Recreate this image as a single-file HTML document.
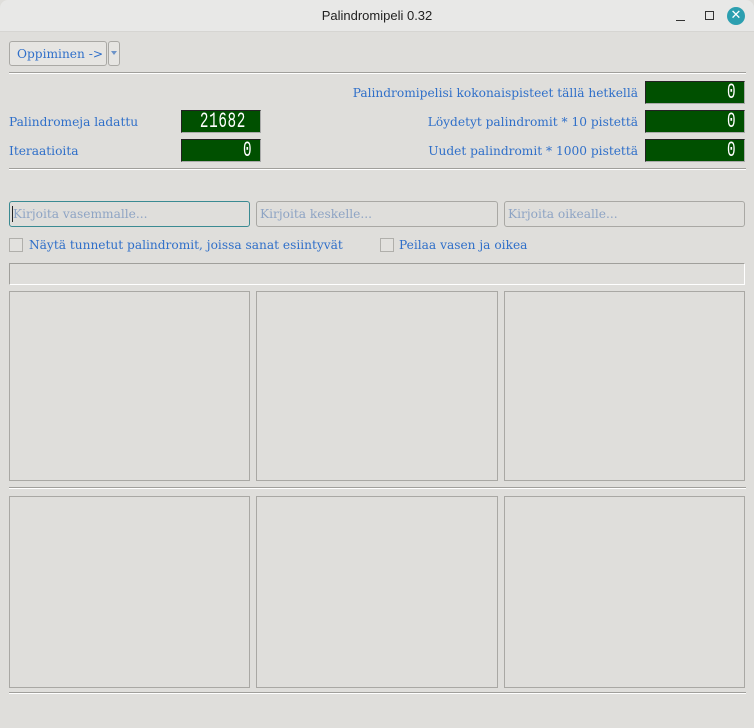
<!DOCTYPE html>
<html><head><meta charset="utf-8"><style>
*{box-sizing:border-box;margin:0;padding:0}
body{width:754px;height:728px;background:#dfdedb;position:relative;overflow:hidden;font-family:"DejaVu Serif","Liberation Serif",serif;font-size:12.2px;color:#2f6fc9}
.a{position:absolute}
.tb{left:0;top:0;width:754px;height:32px;background:#e8e8e7;border-bottom:1px solid #d6d5d2;border-radius:8px 8px 0 0}
.title{left:0;width:754px;top:8px;text-align:center;font-family:"Liberation Sans",sans-serif;font-size:13px;color:#222}
.hr{height:2px;border-top:1px solid #a09f9b;border-bottom:1px solid #fff;left:9px;width:737px}
.lcd{background:#005000;border:1px solid #222;border-right-color:#aaa;border-bottom-color:#aaa;height:23px}
.lcd span{position:absolute;right:8px;top:0;color:#fff;font-family:"Liberation Mono",monospace;font-size:22px;line-height:22px;transform:scaleX(0.65);transform-origin:right;letter-spacing:1px}
.lbl{white-space:nowrap}
.in{height:26px;border:1px solid #a9a8a4;border-radius:3px;color:#8ea4c4;padding:5px 3px;top:201px;white-space:nowrap}
.box{border:1px solid #a9a8a4}
.cb{width:14px;height:14px;border:1px solid #b0afab;background:#e2e1de}
</style></head><body>
<div class="a tb"></div>
<div class="a title">Palindromipeli 0.32</div>
<div class="a" style="left:676px;top:20px;width:9px;height:1px;background:#333"></div>
<div class="a" style="left:705px;top:11px;width:9px;height:9px;border:1px solid #333"></div>
<div class="a" style="left:727px;top:7px;width:18px;height:18px;border-radius:50%;background:#2c9fb0;color:#fff;font:bold 13px/18px 'DejaVu Sans',sans-serif;text-align:center">✕</div>

<div class="a" style="left:9px;top:41px;width:98px;height:25px;border:1px solid #aaa9a5;border-radius:3px;background:#e6e5e2;padding:5px 7px;color:#2f6fc9;white-space:nowrap">Oppiminen -&gt;</div>
<div class="a" style="left:108px;top:41px;width:12px;height:25px;border:1px solid #aaa9a5;border-radius:3px;background:#e6e5e2;"><div class="a" style="left:2px;top:9px;border-left:3px solid transparent;border-right:3px solid transparent;border-top:4px solid #6c93c8"></div></div>
<div class="a hr" style="top:72px"></div>

<div class="a lbl" style="right:116px;top:86px">Palindromipelisi kokonaispisteet tällä hetkellä</div>
<div class="a lcd" style="left:645px;top:81px;width:100px"><span>0</span></div>
<div class="a lbl" style="right:116px;top:115px">Löydetyt palindromit * 10 pistettä</div>
<div class="a lcd" style="left:645px;top:110px;width:100px"><span>0</span></div>
<div class="a lbl" style="right:116px;top:144px">Uudet palindromit * 1000 pistettä</div>
<div class="a lcd" style="left:645px;top:139px;width:100px"><span>0</span></div>

<div class="a lbl" style="left:9px;top:115px">Palindromeja ladattu</div>
<div class="a lcd" style="left:181px;top:110px;width:80px"><span style="right:14px">21682</span></div>
<div class="a lbl" style="left:9px;top:144px">Iteraatioita</div>
<div class="a lcd" style="left:181px;top:139px;width:80px"><span>0</span></div>
<div class="a hr" style="top:168px"></div>

<div class="a in" style="left:9px;width:241px;border-color:#3a8a92">Kirjoita vasemmalle...</div>
<div class="a" style="left:12px;top:206px;width:1px;height:16px;background:#222"></div>
<div class="a in" style="left:256px;width:242px">Kirjoita keskelle...</div>
<div class="a in" style="left:504px;width:241px">Kirjoita oikealle...</div>

<div class="a cb" style="left:9px;top:238px"></div>
<div class="a lbl" style="left:29px;top:238px">Näytä tunnetut palindromit, joissa sanat esiintyvät</div>
<div class="a cb" style="left:380px;top:238px"></div>
<div class="a lbl" style="left:399px;top:238px">Peilaa vasen ja oikea</div>

<div class="a" style="left:9px;top:263px;width:736px;height:22px;border:1px solid #a09f9b;border-right-color:#fff;border-bottom-color:#fff;background:#dfdedb"></div>

<div class="a box" style="left:9px;top:291px;width:241px;height:190px"></div>
<div class="a box" style="left:256px;top:291px;width:242px;height:190px"></div>
<div class="a box" style="left:504px;top:291px;width:241px;height:190px"></div>
<div class="a hr" style="top:487px"></div>
<div class="a box" style="left:9px;top:496px;width:241px;height:192px"></div>
<div class="a box" style="left:256px;top:496px;width:242px;height:192px"></div>
<div class="a box" style="left:504px;top:496px;width:241px;height:192px"></div>
<div class="a hr" style="top:692px"></div>
</body></html>
